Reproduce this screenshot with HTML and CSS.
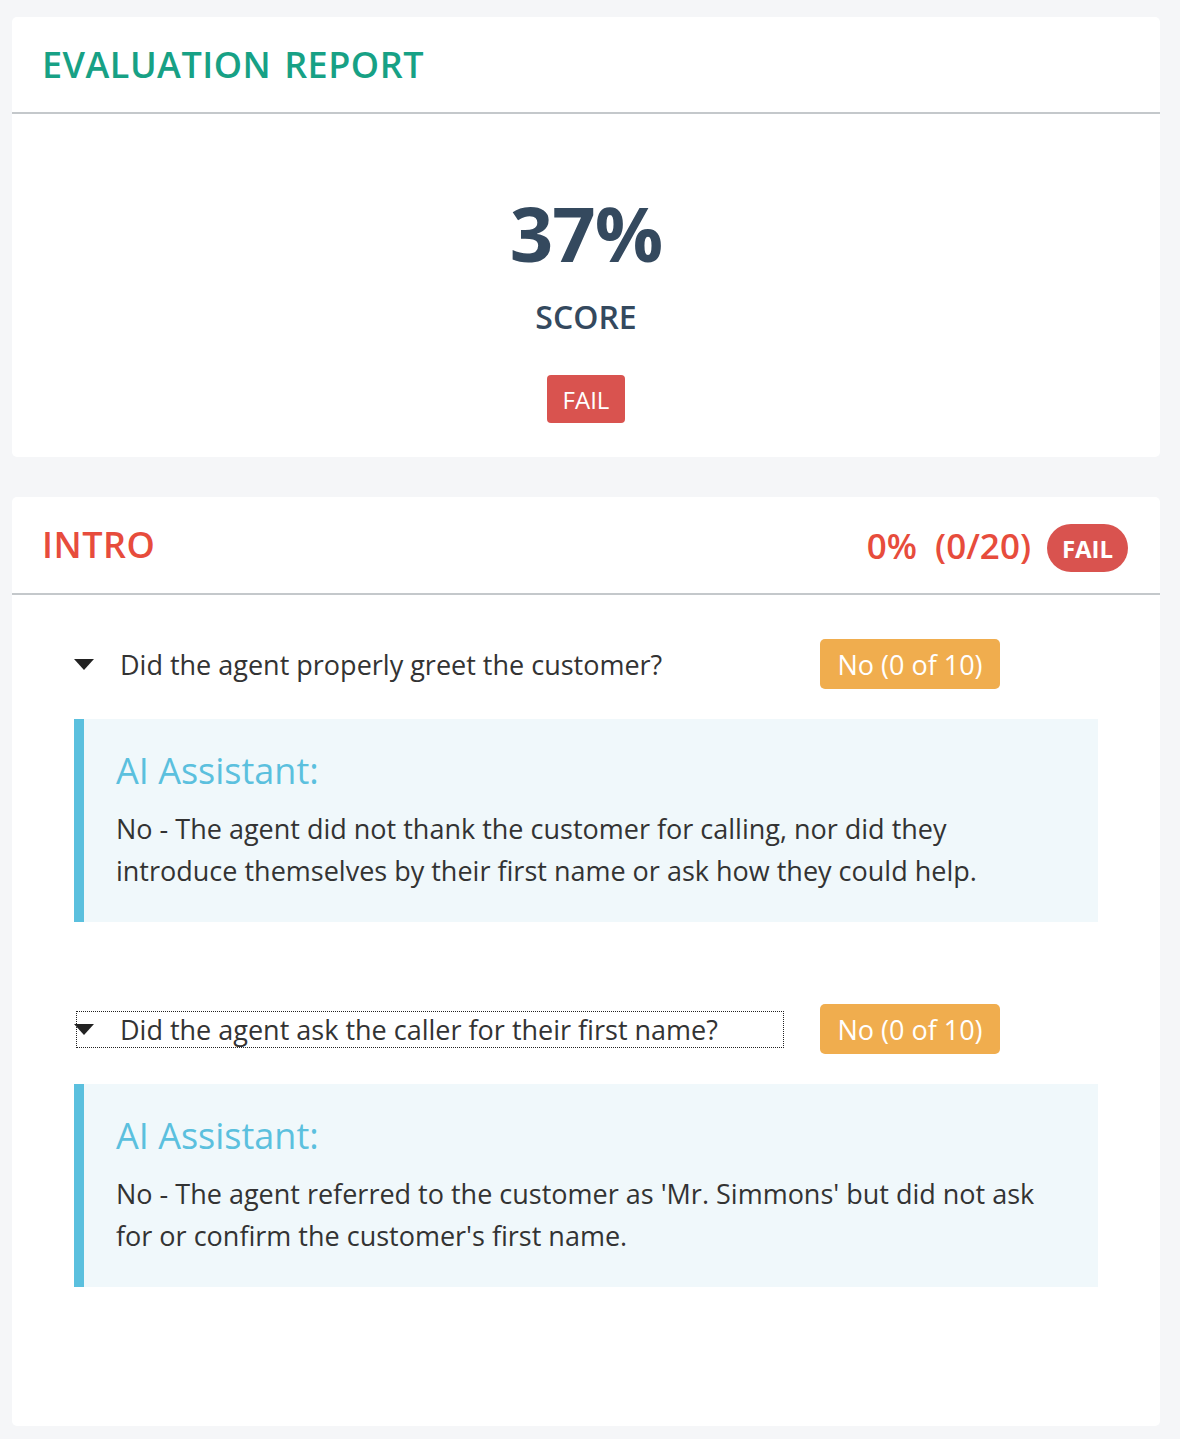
FILE: index.html
```html
<!DOCTYPE html>
<html lang="en">
<head>
<meta charset="utf-8">
<title>Evaluation Report</title>
<link rel="stylesheet" href="styles.css">
</head>
<body>
<main class="page">
  <section class="card">
    <header class="card-header">
      <h1 class="title title-green">EVALUATION REPORT</h1>
    </header>
    <div class="score-body">
      <div class="score-value">37%</div>
      <div class="score-label">SCORE</div>
      <span class="badge-fail">FAIL</span>
    </div>
  </section>

  <section class="card">
    <header class="card-header card-header-tall">
      <h2 class="title title-red">INTRO</h2>
      <div class="section-score">
        <span class="section-pct">0%&nbsp; (0/20)</span>
        <span class="pill-fail">FAIL</span>
      </div>
    </header>
    <div class="questions">
      <div class="qa">
        <div class="q-row">
          <div class="question">
            <span class="caret"></span>
            <span class="q-text">Did the agent properly greet the customer?</span>
          </div>
          <span class="answer">No (0 of 10)</span>
        </div>
        <blockquote class="ai-box">
          <div class="ai-title">AI Assistant:</div>
          <p class="ai-text">No - The agent did not thank the customer for calling, nor did they introduce themselves by their first name or ask how they could help.</p>
        </blockquote>
      </div>
      <div class="qa">
        <div class="q-row">
          <div class="question focused">
            <span class="caret"></span>
            <span class="q-text">Did the agent ask the caller for their first name?</span>
          </div>
          <span class="answer">No (0 of 10)</span>
        </div>
        <blockquote class="ai-box">
          <div class="ai-title">AI Assistant:</div>
          <p class="ai-text">No - The agent referred to the customer as 'Mr. Simmons' but did not ask for or confirm the customer's first name.</p>
        </blockquote>
      </div>
    </div>
  </section>
</main>
</body>
</html>
```

FILE: styles.css
```css
html, body {
  margin: 0;
  padding: 0;
  background: #f5f6f8;
}
body {
  font-family: "Open Sans", "Noto Sans", sans-serif;
  color: #333;
}
.page {
  padding: 17px 20px 14px 12px;
  display: flex;
  flex-direction: column;
  gap: 40px;
}
.card {
  background: #fff;
  border-radius: 5px;
}
.card-header {
  height: 95px;
  padding: 0 32px 0 30px;
  border-bottom: 2px solid #c4c8cb;
  display: flex;
  align-items: center;
  justify-content: space-between;
}
.card-header-tall {
  height: 96px;
}
.title {
  margin: 0;
  font-size: 36px;
  font-weight: 600;
  line-height: 1;
  letter-spacing: 0.5px;
  word-spacing: 3px;
}
.title-green { color: #17a185; }
.title-red { color: #e74c3c; }

.score-body {
  padding: 81px 0 34px;
  display: flex;
  flex-direction: column;
  align-items: center;
}
.score-value {
  font-size: 76px;
  font-weight: 700;
  line-height: 1;
  color: #34495e;
  letter-spacing: -1px;
}
.score-label {
  margin-top: 30px;
  font-size: 32px;
  font-weight: 600;
  line-height: 1;
  color: #34495e;
}
.badge-fail {
  margin-top: 42px;
  height: 48px;
  width: 78px;
  box-sizing: border-box;
  display: flex;
  align-items: center;
  justify-content: center;
  background: #d9534f;
  color: #fff;
  font-size: 24px;
  border-radius: 4px;
}

.section-score {
  display: flex;
  align-items: center;
  gap: 16px;
}
.section-pct {
  font-size: 35px;
  font-weight: 600;
  color: #e74c3c;
  line-height: 1;
}
.pill-fail {
  margin-top: 6px;
  height: 48px;
  width: 81px;
  display: flex;
  align-items: center;
  justify-content: center;
  background: #d9534f;
  color: #fff;
  font-size: 24px;
  font-weight: 700;
  border-radius: 24px;
}

.questions {
  padding: 44px 62px 139px;
  display: flex;
  flex-direction: column;
  gap: 82px;
}
.q-row {
  display: flex;
  align-items: center;
}
.question {
  width: 708px;
  height: 37px;
  box-sizing: border-box;
  margin-left: 2px;
  display: flex;
  align-items: center;
}
.question.focused {
  outline: 1px dotted #222;
  outline-offset: -1px;
}
.caret {
  width: 0;
  height: 0;
  margin-left: -2px;
  border-left: 10.5px solid transparent;
  border-right: 10.5px solid transparent;
  border-top: 11px solid #222;
}
.q-text {
  margin-left: 26px;
  font-size: 27px;
  line-height: 1;
  color: #333;
}
.answer {
  margin-left: 36px;
  height: 50px;
  width: 180px;
  box-sizing: border-box;
  display: flex;
  align-items: center;
  justify-content: center;
  background: #f0ad4e;
  color: #fff;
  font-size: 27px;
  border-radius: 5px;
}
.ai-box {
  margin: 30px 0 0;
  padding: 30px 60px 30px 32px;
  background: #f0f8fb;
  border-left: 10px solid #5bc0de;
}
.ai-title {
  font-size: 36px;
  line-height: 1.2;
  color: #5bc0de;
}
.ai-text {
  margin: 16px 0 0;
  font-size: 27px;
  line-height: 42px;
  color: #333;
}
```
